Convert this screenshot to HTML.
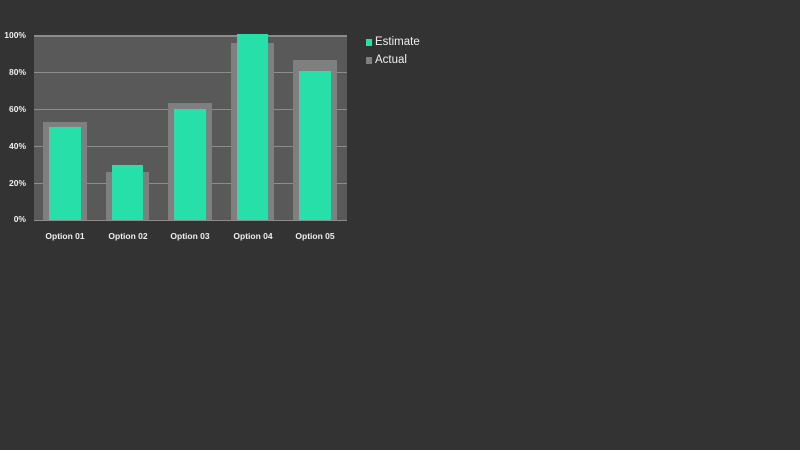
<!DOCTYPE html><html><head><style>
body{margin:0;width:800px;height:450px;background:#333;position:relative;font-family:"Liberation Sans",sans-serif;overflow:hidden}
div{position:absolute}
.g{left:34px;width:313px;height:1px;background:#8c8c8c}
.y{left:0;width:26px;text-align:right;font-size:8.5px;font-weight:bold;color:#eee}
.a{background:#7f7f7f}.e{background:#26dfa9}
.x{font-size:8.5px;font-weight:bold;color:#eee;width:70px;text-align:center;top:231px}
.l{font-size:11.5px;color:#eee}
</style></head><body>
<div style="left:34px;top:35px;width:313px;height:185px;background:#595959"></div>
<div class="g" style="top:35px;height:2px"></div><div class="g" style="top:72px"></div><div class="g" style="top:109px"></div><div class="g" style="top:146px"></div><div class="g" style="top:183px"></div><div class="g" style="top:220px"></div>
<div class="y" style="top:30px">100%</div><div class="y" style="top:67px">80%</div><div class="y" style="top:104px">60%</div><div class="y" style="top:141px">40%</div><div class="y" style="top:178px">20%</div><div class="y" style="top:214px">0%</div>
<div class="a" style="left:43px;top:122px;width:44px;height:98px"></div><div class="e" style="left:49px;top:127px;width:32px;height:93px"></div>
<div class="a" style="left:106px;top:172px;width:43px;height:48px"></div><div class="e" style="left:112px;top:165px;width:31px;height:55px"></div>
<div class="a" style="left:168px;top:103px;width:44px;height:117px"></div><div class="e" style="left:174px;top:109px;width:32px;height:111px"></div>
<div class="a" style="left:231px;top:43px;width:43px;height:177px"></div><div class="e" style="left:237px;top:34px;width:31px;height:186px"></div>
<div class="a" style="left:293px;top:60px;width:44px;height:160px"></div><div class="e" style="left:299px;top:71px;width:32px;height:149px"></div>
<div class="x" style="left:30px">Option 01</div><div class="x" style="left:93px">Option 02</div><div class="x" style="left:155px">Option 03</div><div class="x" style="left:218px">Option 04</div><div class="x" style="left:280px">Option 05</div>
<div class="e" style="left:366px;top:39px;width:6px;height:7px"></div><div class="l" style="left:375px;top:36px">Estimate</div>
<div class="a" style="left:366px;top:57px;width:6px;height:7px"></div><div class="l" style="left:375px;top:54px">Actual</div>
</body></html>
